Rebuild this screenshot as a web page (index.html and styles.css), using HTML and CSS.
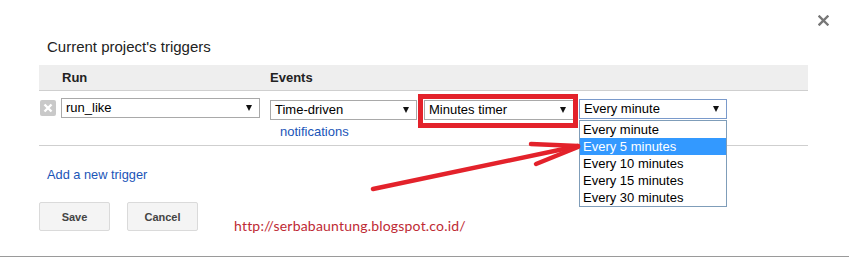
FILE: index.html
```html
<!DOCTYPE html>
<html>
<head>
<meta charset="utf-8">
<link rel="stylesheet" href="styles.css">
</head>
<body>
<div class="page">
  <div class="close-row">
    <svg class="close" width="11" height="11" viewBox="0 0 11 11"><path d="M1.5 1.5 L9.5 9.5 M9.5 1.5 L1.5 9.5" stroke="#777" stroke-width="2.4" stroke-linecap="square"/></svg>
  </div>
  <div class="title">Current project's triggers</div>
  <div class="table">
    <div class="thead">
      <div class="col-run">Run</div>
      <div class="col-events">Events</div>
    </div>
    <div class="trow">
      <div class="cell-run">
        <span class="del"><svg width="16" height="16" viewBox="0 0 16 16"><rect width="16" height="16" rx="2" fill="#c9c9c9"/><path d="M4.5 4.5 L11.5 11.5 M11.5 4.5 L4.5 11.5" stroke="#fff" stroke-width="2.4"/></svg></span>
        <div class="sel sel-run">run_like<span class="caret"></span></div>
      </div>
      <div class="cell-events">
        <div class="sel-line">
          <div class="sel sel-type">Time-driven<span class="caret"></span></div>
          <div class="sel sel-timer">Minutes timer<span class="caret"></span></div>
          <div class="sel sel-every focus">Every minute<span class="caret"></span>
            <ul class="dropdown">
              <li>Every minute</li>
              <li class="hl">Every 5 minutes</li>
              <li>Every 10 minutes</li>
              <li>Every 15 minutes</li>
              <li>Every 30 minutes</li>
            </ul>
          </div>
        </div>
        <a class="link notif">notifications</a>
      </div>
    </div>
  </div>
  <a class="link add">Add a new trigger</a>
  <div class="actions">
    <button class="btn">Save</button>
    <button class="btn">Cancel</button>
    <span class="url">http://serbabauntung.blogspot.co.id/</span>
  </div>
  <svg class="annot" width="849" height="257" viewBox="0 0 849 257">
    <rect x="420.5" y="96.5" width="155" height="29" fill="none" stroke="#e3222b" stroke-width="5"/>
    <g stroke="#e3222b" stroke-width="4.5" stroke-linecap="round" fill="none">
      <path d="M373 189 L578 146"/>
      <path d="M531 144 L578 146"/>
      <path d="M536 164 L578 147"/>
    </g>
  </svg>
</div>
</body>
</html>
```
FILE: styles.css
```css
html, body { margin: 0; padding: 0; background: #fff; }
body { font-family: "Liberation Sans", Arial, sans-serif; color: #222; }
.page { position: relative; height: 256px; border-bottom: 1px solid #9a9a9a; overflow: hidden; }
.close-row { height: 38px; display: flex; justify-content: flex-end; align-items: flex-start; padding-right: 20px; box-sizing: border-box; padding-top: 15px; }
.close { display: block; }
.title { margin-left: 47px; font-size: 15px; line-height: 18px; height: 18px; color: #222; }
.table { margin: 9px 0 0 39px; width: 769px; }
.thead { display: flex; height: 25px; background: #eeeeee; border-bottom: 1px solid #cfcfcf; font-weight: bold; font-size: 13px; line-height: 25px; color: #222; }
.col-run { width: 208px; padding-left: 23px; }
.col-events { padding-left: 0; }
.trow { display: flex; height: 54px; border-bottom: 1px solid #cfcfcf; box-sizing: content-box; }
.cell-run { width: 231px; display: flex; align-items: flex-start; padding-top: 7px; box-sizing: border-box; padding-left: 1px; }
.del { display: block; width: 16px; height: 16px; margin: 2px 5px 0 0; }
.del svg { display: block; }
.sel { position: relative; box-sizing: border-box; height: 20px; border: 1px solid #a9a9a9; background: #fff; font-size: 13px; line-height: 18px; padding-left: 4px; color: #000; }
.caret { position: absolute; right: 7px; top: 6px; width: 0; height: 0; border-left: 3px solid transparent; border-right: 3px solid transparent; border-top: 6px solid #111; }
.sel-run { width: 199px; }
.cell-events { padding-top: 8px; display: flex; flex-direction: column; }
.sel-line { display: flex; align-items: flex-start; }
.sel-type { width: 147px; margin-top: 1px; }
.sel-timer { width: 150px; margin-left: 7px; margin-top: 1px; }
.sel-every { width: 148px; margin-left: 5px; }
.sel-every.focus { border-color: #7a9acb; }
.dropdown { position: absolute; left: -1px; top: 20px; width: 148px; box-sizing: border-box; margin: 0; padding: 0; list-style: none; border: 1px solid #7f9db9; background: #fff; z-index: 2; }
.dropdown li { height: 17px; line-height: 17px; padding-left: 3px; font-size: 13px; color: #000; }
.dropdown li.hl { background: #3399ff; color: #fff; }
.link { color: #1a55b8; font-size: 13px; text-decoration: none; }
.notif { display: block; margin: 4px 0 0 10px; line-height: 15px; }
.add { display: block; margin: 21px 0 0 47px; line-height: 16px; font-size: 12.8px; }
.actions { display: flex; align-items: flex-start; margin: 19px 0 0 39px; }
.btn { width: 71px; height: 29px; box-sizing: border-box; background: #f4f4f4; border: 1px solid #dadada; border-radius: 2px; font-family: "Liberation Sans", Arial, sans-serif; font-weight: bold; font-size: 11px; color: #444; padding: 0; margin-right: 17px; }
.url { margin: 15px 0 0 19px; font-family: Lato, "Open Sans", sans-serif; font-size: 14px; color: #be2a34; letter-spacing: 0.2px; }
.annot { position: absolute; left: 0; top: 0; pointer-events: none; z-index: 3; }
```
